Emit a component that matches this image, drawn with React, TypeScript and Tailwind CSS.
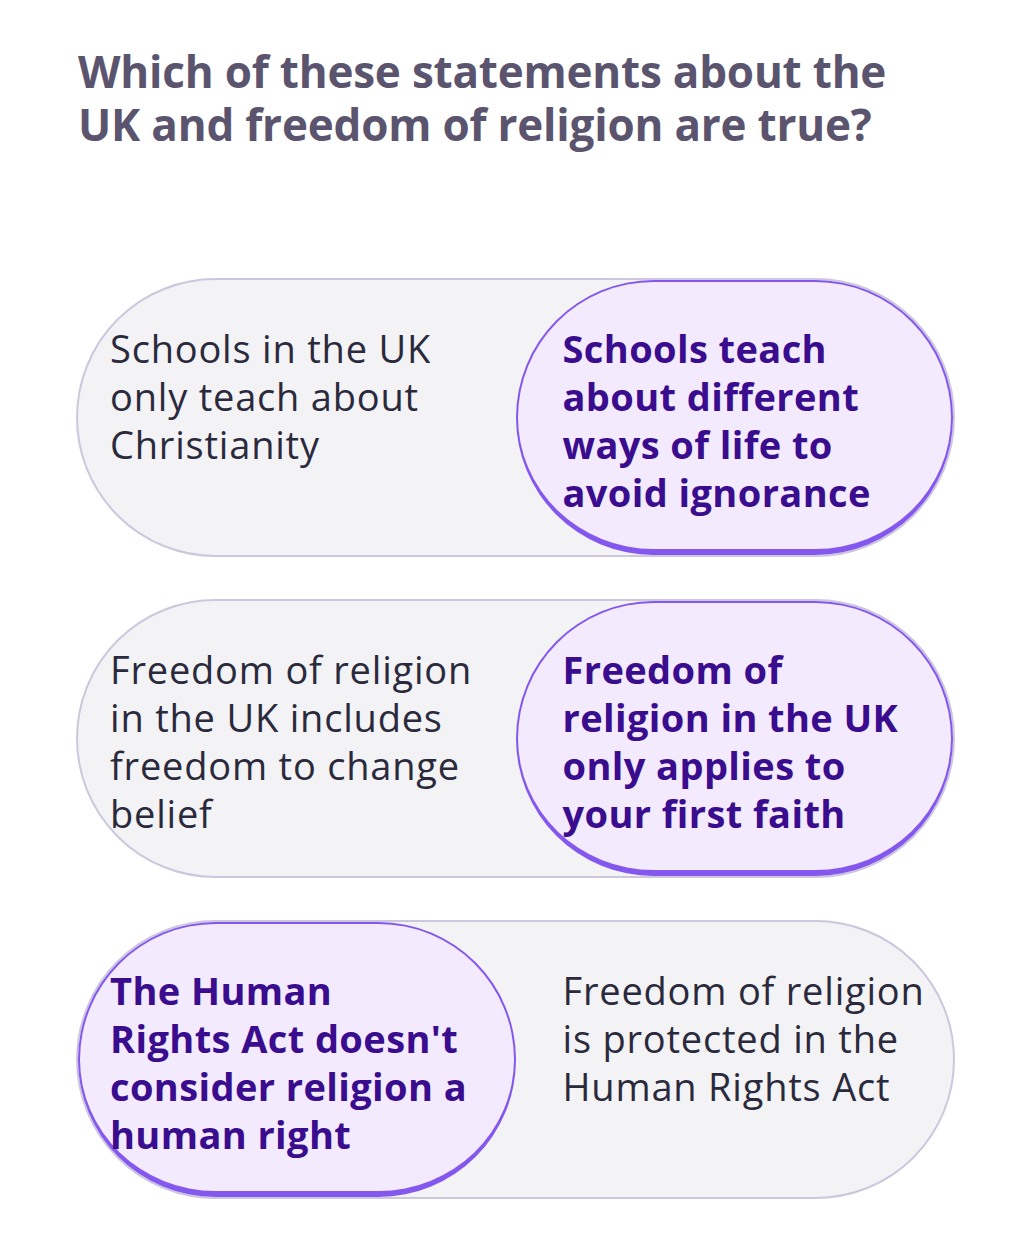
import React from 'react'

type Pair = {
  left: string[]
  right: string[]
  picked: 'left' | 'right'
}

const PAIRS: Pair[] = [
  {
    left: ['Schools in the UK', 'only teach about', 'Christianity'],
    right: ['Schools teach', 'about different', 'ways of life to', 'avoid ignorance'],
    picked: 'right',
  },
  {
    left: ['Freedom of religion', 'in the UK includes', 'freedom to change', 'belief'],
    right: ['Freedom of', 'religion in the UK', 'only applies to', 'your first faith'],
    picked: 'right',
  },
  {
    left: ['The Human', "Rights Act doesn't", 'consider religion a', 'human right'],
    right: ['Freedom of religion', 'is protected in the', 'Human Rights Act'],
    picked: 'left',
  },
]

function Option({ lines, selected, side }: { lines: string[]; selected: boolean; side: 'left' | 'right' }) {
  const pad = side === 'left' ? 'pl-[30px]' : 'pl-[45px]'
  return (
    <div
      className={
        (selected
          ? 'rounded-[140px] border-2 border-b-[6px] border-[#8457ee] bg-[#f3eafd] font-bold tracking-[0.4px] text-[#3a0c8e] '
          : 'rounded-[140px] border-2 border-b-[6px] border-transparent tracking-[0.8px] text-[#2b2a3d] ') +
        pad +
        ' min-w-0 whitespace-nowrap pt-[42px] text-[38px] leading-[48px]'
      }
    >
      {lines.map((l, i) => (
        <div key={i}>{l}</div>
      ))}
    </div>
  )
}

export default function App() {
  return (
    <div
      className="min-h-[1235px] w-[1027px] bg-white pl-[76px] pr-[72px] pt-[45px]"
      style={{ fontFamily: '"Open Sans", Lato, sans-serif' }}
    >
      <h1 className="pl-[2px] text-[44px] font-bold leading-[53px] tracking-[-0.2px] text-[#5b546e]">
        <span className="block">Which of these statements about the</span>
        <span className="block">UK and freedom of religion are true?</span>
      </h1>

      <div className="mt-[127px] flex flex-col gap-[42px]">
        {PAIRS.map((p, i) => (
          <div
            key={i}
            className="grid h-[279px] grid-cols-2 rounded-[140px] border-2 border-[#cdc7de] bg-[#f3f3f6]"
          >
            <Option lines={p.left} selected={p.picked === 'left'} side="left" />
            <Option lines={p.right} selected={p.picked === 'right'} side="right" />
          </div>
        ))}
      </div>
    </div>
  )
}
